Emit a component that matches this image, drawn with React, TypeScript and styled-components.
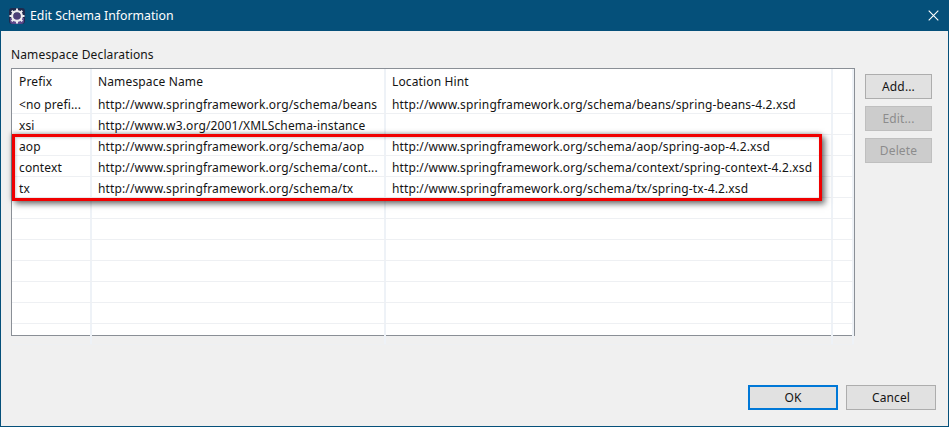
import React from "react";
import styled, { createGlobalStyle } from "styled-components";

const Global = createGlobalStyle`
  html, body { margin: 0; padding: 0; background: #05507a; }
  * { box-sizing: border-box; }
`;

const Window = styled.div`
  width: 949px;
  height: 427px;
  background: #05507a;
  padding: 0 1px 1px 1px;
  display: flex;
  flex-direction: column;
  font-family: "Noto Sans", "Open Sans", sans-serif;
  font-size: 12px;
  letter-spacing: 0.135px;
  color: #141414;
  overflow: hidden;
`;

const TitleBar = styled.div`
  height: 31px;
  flex: none;
  display: flex;
  align-items: center;
  padding: 0 0 0 7px;
  gap: 4px;
  color: #ffffff;
  font-size: 12.3px;
  letter-spacing: 0;
`;

const TitleText = styled.span`
  flex: 1;
`;

const CloseButton = styled.button`
  width: 30px;
  height: 31px;
  border: 0;
  padding: 0;
  background: transparent;
  display: flex;
  align-items: center;
  justify-content: center;
`;

const Body = styled.div`
  flex: 1;
  background: #f0f0f0;
  padding: 15px 12px 16px 10px;
  display: flex;
  flex-direction: column;
`;

const GroupLabel = styled.div`
  height: 22px;
  line-height: 17px;
  flex: none;
`;

const Main = styled.div`
  display: flex;
  flex: 1;
  align-items: flex-start;
`;

const TableFrame = styled.div`
  position: relative;
  width: 844px;
  height: 268px;
  background: #ffffff;
  border: 1px solid #8a8f96;
  flex: none;
`;

const Row = styled.div<{ $header?: boolean }>`
  display: grid;
  grid-template-columns: 80px 294px 447px 1fr;
  height: ${(p) => (p.$header ? "24px" : "21px")};
  border-bottom: ${(p) => (p.$header ? "0" : "1px solid #eef0f3")};
`;

const Cell = styled.div`
  padding: 2px 0 0 6px;
  border-right: 2px solid #eef2f7;
  line-height: 20px;
  white-space: nowrap;
  overflow: hidden;
  &:first-child { padding-left: 7px; }
`;

const HeaderCell = styled(Cell)`
  padding-top: 0;
  line-height: 25px;
`;

const Highlight = styled.div`
  position: absolute;
  left: 0;
  top: 65px;
  width: 810px;
  height: 67px;
  border: 3px solid #f00000;
  box-shadow: 3px 3px 6px rgba(0, 0, 0, 0.55), -1px -1px 4px rgba(0, 0, 0, 0.25), inset 1px 1px 3px rgba(0, 0, 0, 0.2);
  pointer-events: none;
`;

const SideButtons = styled.div`
  display: flex;
  flex-direction: column;
  gap: 7px;
  margin: 6px 0 0 10px;
`;

const Button = styled.button<{ $w: number; $default?: boolean }>`
  width: ${(p) => p.$w}px;
  height: 25px;
  padding: 0;
  font: inherit;
  letter-spacing: inherit;
  color: ${(p) => (p.disabled ? "#8c8c8c" : "#141414")};
  background: ${(p) => (p.disabled ? "#cccccc" : "#e1e1e1")};
  border: ${(p) => (p.$default ? "2px solid #0078d7" : p.disabled ? "1px solid #bfbfbf" : "1px solid #adadad")};
`;

const Footer = styled.div`
  display: flex;
  justify-content: flex-end;
  gap: 8px;
  flex: none;
`;

const rows = [
  ["<no prefi...", "http://www.springframework.org/schema/beans", "http://www.springframework.org/schema/beans/spring-beans-4.2.xsd"],
  ["xsi", "http://www.w3.org/2001/XMLSchema-instance", ""],
  ["aop", "http://www.springframework.org/schema/aop", "http://www.springframework.org/schema/aop/spring-aop-4.2.xsd"],
  ["context", "http://www.springframework.org/schema/cont...", "http://www.springframework.org/schema/context/spring-context-4.2.xsd"],
  ["tx", "http://www.springframework.org/schema/tx", "http://www.springframework.org/schema/tx/spring-tx-4.2.xsd"],
  ["", "", ""], ["", "", ""], ["", "", ""], ["", "", ""], ["", "", ""], ["", "", ""], ["", "", ""],
];

const GearIcon = () => (
  <svg width="18" height="18" viewBox="0 0 18 18">
    <rect x="1" y="1" width="16" height="16" rx="3" fill="#1f2a4e" />
    <path d="M2 11h14v3a3 3 0 0 1-3 3H5a3 3 0 0 1-3-3z" fill="#5d4a8c" />
    <circle cx="9" cy="9" r="3.6" fill="#4b3f78" />
    <circle cx="9" cy="9" r="4.9" fill="none" stroke="#ecebef" strokeWidth="2.2" />
    <g stroke="#ecebef" strokeWidth="2">
      <path d="M9 1.5v3M9 13.5v3M1.5 9h3M13.5 9h3M3.7 3.7l2.1 2.1M12.2 12.2l2.1 2.1M3.7 14.3l2.1-2.1M12.2 5.8l2.1-2.1" />
    </g>
  </svg>
);

export default function App() {
  return (
    <Window>
      <Global />
      <TitleBar>
        <GearIcon />
        <TitleText>Edit Schema Information</TitleText>
        <CloseButton aria-label="Close">
          <svg width="11" height="11" viewBox="0 0 11 11">
            <path d="M0.7 0.7l9.6 9.6M10.3 0.7L0.7 10.3" stroke="#ffffff" strokeWidth="1.1" fill="none" />
          </svg>
        </CloseButton>
      </TitleBar>
      <Body>
        <GroupLabel>Namespace Declarations</GroupLabel>
        <Main>
          <TableFrame>
            <Row $header>
              <HeaderCell>Prefix</HeaderCell>
              <HeaderCell>Namespace Name</HeaderCell>
              <HeaderCell>Location Hint</HeaderCell>
              <HeaderCell />
            </Row>
            {rows.map((r, i) => (
              <Row key={i}>
                <Cell>{r[0]}</Cell>
                <Cell>{r[1]}</Cell>
                <Cell>{r[2]}</Cell>
                <Cell />
              </Row>
            ))}
            <Highlight />
          </TableFrame>
          <SideButtons>
            <Button $w={67}>Add...</Button>
            <Button $w={67} disabled>Edit...</Button>
            <Button $w={67} disabled>Delete</Button>
          </SideButtons>
        </Main>
        <Footer>
          <Button $w={90} $default>OK</Button>
          <Button $w={90}>Cancel</Button>
        </Footer>
      </Body>
    </Window>
  );
}
